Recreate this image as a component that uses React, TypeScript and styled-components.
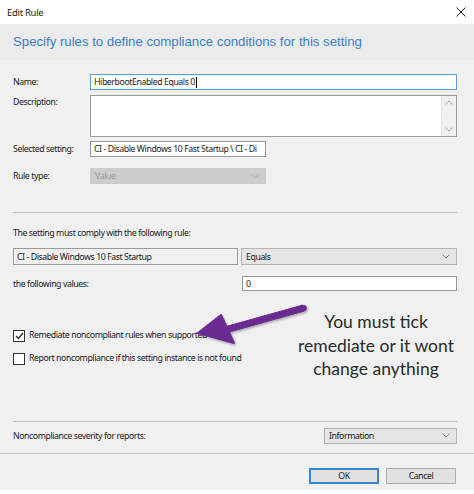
import React from "react";
import styled, { createGlobalStyle } from "styled-components";

const GlobalStyle = createGlobalStyle`
  html, body {
    margin: 0;
    padding: 0;
    background: #ffffff;
  }
  * {
    box-sizing: border-box;
  }
`;

const Window = styled.div`
  position: relative;
  width: 474px;
  height: 494px;
  display: flex;
  flex-direction: column;
  background: #f0f0f0;
  font-family: "Noto Sans", "Open Sans", sans-serif;
  font-size: 8.8px;
  letter-spacing: -0.45px;
  color: #1a1a1a;
  overflow: hidden;
`;

const TitleBar = styled.div`
  height: 24px;
  display: flex;
  align-items: center;
  justify-content: space-between;
  padding: 0 7px;
  background: #ffffff;
  font-size: 9.5px;
  letter-spacing: -0.3px;
`;

const CloseIcon = styled.svg`
  width: 10px;
  height: 10px;
  margin-right: 1px;
`;

const Header = styled.div`
  height: 36px;
  display: flex;
  align-items: center;
  padding: 0 13px 2px;
  background: #ebebeb;
  color: #3a7fcc;
  font-family: "Liberation Sans", Arial, sans-serif;
  font-size: 13.2px;
  letter-spacing: 0;
`;

const Body = styled.div`
  display: flex;
  flex-direction: column;
  padding: 0 17px 0 13px;
`;

const FormRow = styled.div<{ $top: number }>`
  display: flex;
  align-items: flex-start;
  margin-top: ${(p) => p.$top}px;
`;

const Label = styled.div<{ $width?: number; $pad?: number }>`
  width: ${(p) => p.$width ?? 77}px;
  flex-shrink: 0;
  padding-top: ${(p) => p.$pad ?? 1}px;
  line-height: 14px;
  white-space: nowrap;
`;

const TextBox = styled.div<{ $width?: number; $height?: number; $focus?: boolean; $ro?: boolean }>`
  width: ${(p) => (p.$width ? `${p.$width}px` : "auto")};
  flex: ${(p) => (p.$width ? "none" : 1)};
  height: ${(p) => p.$height ?? 16}px;
  display: flex;
  align-items: center;
  padding: 0 3px;
  border: 1px solid ${(p) => (p.$focus ? "#5a9ee0" : "#9a9a9a")};
  background: ${(p) => (p.$ro ? "#f0f0f0" : "#ffffff")};
  white-space: nowrap;
  overflow: hidden;
`;

const Caret = styled.span`
  display: inline-block;
  width: 1px;
  height: 11px;
  background: #000;
  margin-left: 1px;
`;

const TextArea = styled.div`
  flex: 1;
  height: 42px;
  display: flex;
  justify-content: flex-end;
  border: 1px solid #9a9a9a;
  background: #ffffff;
`;

const ScrollBar = styled.div`
  width: 15px;
  display: flex;
  flex-direction: column;
  justify-content: space-between;
  align-items: center;
  padding: 4px 0;
  background: #f0f0f0;
  border-left: 1px solid #e6e6e6;
`;

const Chevron = ({ up, color = "#a8a8a8" }: { up?: boolean; color?: string }) => (
  <svg width="8" height="5" viewBox="0 0 8 5">
    <path
      d={up ? "M0.5 4.5 L4 1 L7.5 4.5" : "M0.5 0.5 L4 4 L7.5 0.5"}
      fill="none"
      stroke={color}
      strokeWidth="1"
    />
  </svg>
);

const Combo = styled.div<{ $width?: number; $disabled?: boolean; $height?: number }>`
  width: ${(p) => (p.$width ? `${p.$width}px` : "auto")};
  flex: ${(p) => (p.$width ? "none" : 1)};
  height: ${(p) => p.$height ?? 16}px;
  display: flex;
  align-items: center;
  justify-content: space-between;
  padding: 0 6px 0 4px;
  border: 1px solid ${(p) => (p.$disabled ? "#cccccc" : "#b4b4b4")};
  background: ${(p) => (p.$disabled ? "#cccccc" : "#e5e5e5")};
  color: ${(p) => (p.$disabled ? "#9c9c9c" : "#1a1a1a")};
`;

const Separator = styled.div<{ $top: number }>`
  height: 1px;
  margin-top: ${(p) => p.$top}px;
  background: #bdbdbd;
`;

const Caption = styled.div<{ $top: number }>`
  margin-top: ${(p) => p.$top}px;
  line-height: 14px;
`;

const RuleRow = styled.div`
  display: flex;
  gap: 3px;
  margin-top: 8px;
`;

const ValuesRow = styled.div`
  display: flex;
  align-items: center;
  margin-top: 11px;
`;

const CheckSection = styled.div`
  display: flex;
  justify-content: space-between;
  align-items: flex-start;
  margin-top: 12px;
`;

const CheckList = styled.div`
  display: flex;
  flex-direction: column;
  gap: 10px;
  padding-top: 26px;
`;

const CheckRow = styled.div`
  display: flex;
  align-items: center;
  gap: 4px;
  line-height: 13px;
`;

const CheckBox = styled.div`
  width: 12px;
  height: 12px;
  border: 1px solid #333333;
  background: #ffffff;
  display: flex;
  align-items: center;
  justify-content: center;
`;

const Note = styled.div`
  width: 170px;
  margin: 7px -4px 0 0;
  text-align: center;
  font-family: Lato, "Open Sans", sans-serif;
  font-size: 17.5px;
  line-height: 23.5px;
  letter-spacing: 0;
  color: #2a2a2a;
`;

const SeverityRow = styled.div`
  display: flex;
  align-items: center;
  justify-content: space-between;
  margin-top: 6px;
`;

const Footer = styled.div`
  flex: 1;
  display: flex;
  justify-content: flex-end;
  align-items: flex-start;
  gap: 7px;
  margin-top: 9px;
  padding: 14px 18px 0 0;
  border-top: 1px solid #c4c4c4;
  border-bottom: 4px solid #ffffff;
`;

const Button = styled.div<{ $default?: boolean }>`
  width: 70px;
  height: 16px;
  display: flex;
  align-items: center;
  justify-content: center;
  background: #e1e1e1;
  border: ${(p) => (p.$default ? "2px solid #3a84d0" : "1px solid #adadad")};
`;

const Arrow = styled.svg`
  position: absolute;
  left: 190px;
  top: 295px;
  width: 130px;
  height: 55px;
  pointer-events: none;
`;

export default function App() {
  return (
    <>
      <GlobalStyle />
      <Window>
        <TitleBar>
          <span>Edit Rule</span>
          <CloseIcon viewBox="0 0 10 10">
            <path d="M0.5 0.5 L9.5 9.5 M9.5 0.5 L0.5 9.5" stroke="#222" strokeWidth="1" />
          </CloseIcon>
        </TitleBar>
        <Header>Specify rules to define compliance conditions for this setting</Header>
        <Body>
          <FormRow $top={14}>
            <Label>Name:</Label>
            <TextBox $focus $height={16}>
              HiberbootEnabled Equals 0<Caret />
            </TextBox>
          </FormRow>
          <FormRow $top={5}>
            <Label $pad={0}>Description:</Label>
            <TextArea>
              <ScrollBar>
                <Chevron up />
                <Chevron />
              </ScrollBar>
            </TextArea>
          </FormRow>
          <FormRow $top={4}>
            <Label>Selected setting:</Label>
            <TextBox $width={176}>CI - Disable Windows 10 Fast Startup \ CI - Di</TextBox>
          </FormRow>
          <FormRow $top={11}>
            <Label>Rule type:</Label>
            <Combo $width={176} $disabled>
              <span>Value</span>
              <Chevron color="#b0b0b0" />
            </Combo>
          </FormRow>
          <Separator $top={28} />
          <Caption $top={13}>The setting must comply with the following rule:</Caption>
          <RuleRow>
            <TextBox $width={225} $height={17} $ro>
              CI - Disable Windows 10 Fast Startup
            </TextBox>
            <Combo $height={17}>
              <span>Equals</span>
              <Chevron color="#888" />
            </Combo>
          </RuleRow>
          <ValuesRow>
            <Label $width={229} $pad={0}>
              the following values:
            </Label>
            <TextBox $height={15}>0</TextBox>
          </ValuesRow>
          <CheckSection>
            <CheckList>
              <CheckRow>
                <CheckBox>
                  <svg width="9" height="8" viewBox="0 0 9 8">
                    <path d="M1 4 L3.5 6.5 L8 1" fill="none" stroke="#222" strokeWidth="1.2" />
                  </svg>
                </CheckBox>
                <span>Remediate noncompliant rules when supported</span>
              </CheckRow>
              <CheckRow>
                <CheckBox />
                <span>Report noncompliance if this setting instance is not found</span>
              </CheckRow>
            </CheckList>
            <Note>
              You must tick
              <br />
              remediate or it wont
              <br />
              change anything
            </Note>
          </CheckSection>
          <Separator $top={40} />
          <SeverityRow>
            <span>Noncompliance severity for reports:</span>
            <Combo $width={133}>
              <span>Information</span>
              <Chevron color="#888" />
            </Combo>
          </SeverityRow>
        </Body>
        <Footer>
          <Button $default>OK</Button>
          <Button>Cancel</Button>
        </Footer>
        <Arrow viewBox="0 0 130 55">
          <defs>
            <filter id="sh" x="-20%" y="-40%" width="140%" height="180%">
              <feDropShadow dx="1" dy="1.5" stdDeviation="1.2" floodColor="#000" floodOpacity="0.3" />
            </filter>
          </defs>
          <g filter="url(#sh)" fill="#6b2c91">
            <path d="M113 10 L36 31.5 L37.5 37.5 L114.5 16 Z" stroke="#6b2c91" strokeWidth="1" strokeLinejoin="round" />
            <path d="M8 38 L31 20 L44 48 Z" strokeLinejoin="round" stroke="#6b2c91" strokeWidth="2" />
            <circle cx="113.8" cy="13" r="3.1" />
          </g>
        </Arrow>
      </Window>
    </>
  );
}
